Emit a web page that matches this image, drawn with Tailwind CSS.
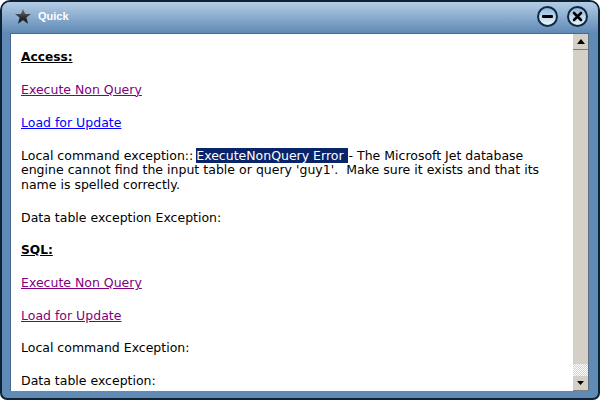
<!DOCTYPE html>
<html lang="en">
<head>
  <meta charset="UTF-8" />
  <title>Quick</title>
  <script src="https://cdn.jsdelivr.net/npm/@tailwindcss/browser@4"></script>
</head>
<body class="w-[600px] h-[400px] overflow-hidden bg-white font-['DejaVu_Sans',sans-serif]">

  <!-- Window frame -->
  <div class="w-[600px] h-[400px] flex flex-col bg-[#5f8ab5] border-2 border-[#0f2233] rounded-t-[10px] rounded-b-[7px] overflow-hidden">

    <!-- Title bar -->
    <div class="h-[31px] shrink-0 flex items-center pl-[13px] pr-[10px] pb-[2px] bg-gradient-to-b from-[#b4cde6] to-[#5f8ab5]">
      <svg class="w-[16px] h-[15px]" viewBox="0 0 16 15">
        <defs><linearGradient id="star" x1="0" y1="0" x2="0" y2="1"><stop offset="0" stop-color="#6f7478"/><stop offset="0.6" stop-color="#2a2a2e"/><stop offset="1" stop-color="#1c1c20"/></linearGradient></defs>
        <path d="M8 0l2.200 5H16l-4.600 3.600 1.700 6.200L8 11.200l-5.100 3.600 1.700-6.200L0 5h5.800z" fill="url(#star)"/>
      </svg>
      <span class="ml-[7px] text-[11px] font-bold text-white font-['Liberation_Sans',sans-serif]">Quick</span>
      <div class="ml-auto flex gap-[9px]">
        <div class="w-[21px] h-[21px] rounded-full border-2 border-[#10293f] bg-gradient-to-b from-[#8fb8dd] to-[#eaf4fd] flex items-center justify-center">
          <div class="w-[11px] h-[3px] bg-black rounded-[1px]"></div>
        </div>
        <div class="w-[21px] h-[21px] rounded-full border-2 border-[#10293f] bg-gradient-to-b from-[#8fb8dd] to-[#eaf4fd] flex items-center justify-center">
          <svg class="w-[11px] h-[11px]" viewBox="0 0 11 11"><path d="M2 2l7 7M9 2l-7 7" stroke="#000" stroke-width="2.600" stroke-linecap="round"/></svg>
        </div>
      </div>
    </div>

    <!-- Client area -->
    <div class="w-[579px] h-[358px] ml-[8px] flex border-t border-l border-[#47698c]">

      <!-- Page content -->
      <div class="w-[562px] h-full bg-white overflow-hidden pl-[10px] pt-[16px] text-[12.500px] leading-[14.500px] text-black">
        <p class="font-bold underline text-[12.200px]">Access:</p>
        <p class="mt-[18.200px]"><a href="#" class="text-[#800080] underline">Execute Non Query</a></p>
        <p class="mt-[19px]"><a href="#" class="text-[#0000ff] underline">Load for Update</a></p>
        <p class="mt-[18.200px] w-[530px]">Local command exception:: <span class="-ml-[1px] mr-[1px] bg-[#0a246a] text-white">ExecuteNonQuery Error </span> - The Microsoft Jet database <span class="[word-spacing:0.100px]">engine cannot find the input table or query 'guy1'.&nbsp; Make sure it exists and that its</span> name is spelled correctly.</p>
        <p class="mt-[18.200px]">Data table exception Exception:</p>
        <p class="mt-[18.200px] font-bold underline text-[12.200px]">SQL:</p>
        <p class="mt-[18.200px]"><a href="#" class="text-[#800080] underline">Execute Non Query</a></p>
        <p class="mt-[18.200px]"><a href="#" class="text-[#800080] underline">Load for Update</a></p>
        <p class="mt-[18.200px]">Local command Exception:</p>
        <p class="mt-[18.200px]">Data table exception:</p>
      </div>

      <!-- Scrollbar -->
      <div class="w-[16px] h-full flex flex-col bg-[#d4d0c8] border-r border-[#5f6f80]">
        <div class="h-[16px] shrink-0 flex items-center justify-center border-b border-[#808080]">
          <svg class="w-[8px] h-[5px]" viewBox="0 0 8 5"><path d="M4 0l4 5H0z" fill="#000"/></svg>
        </div>
        <div class="flex-1"></div>
        <svg class="w-full h-[12px] shrink-0" viewBox="0 0 15 12" shape-rendering="crispEdges">
          <defs><pattern id="dither" width="2" height="2" patternUnits="userSpaceOnUse"><rect width="2" height="2" fill="#fff"/><rect width="1" height="1" fill="#d4d0c8"/><rect x="1" y="1" width="1" height="1" fill="#d4d0c8"/></pattern></defs>
          <rect width="15" height="12" fill="url(#dither)"/>
        </svg>
        <div class="h-[15px] shrink-0 flex items-center justify-center border-b border-[#808080]">
          <svg class="w-[7px] h-[4px]" viewBox="0 0 7 4"><path d="M0 0h7L3.500 4z" fill="#000"/></svg>
        </div>
      </div>
    </div>
  </div>

</body>
</html>
